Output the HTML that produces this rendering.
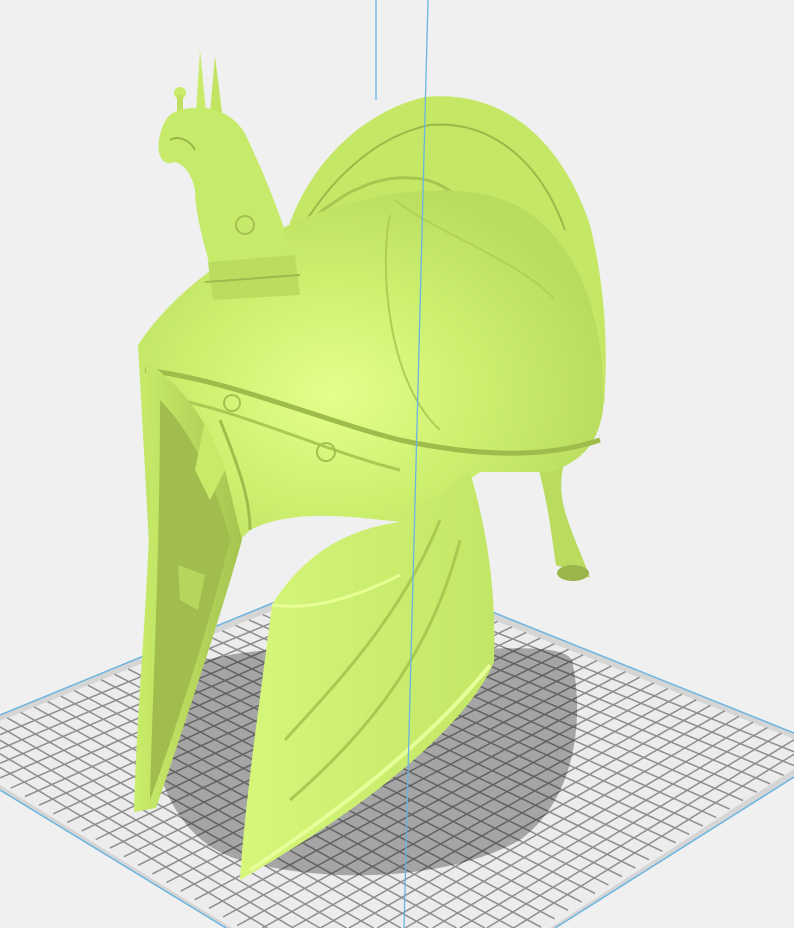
<!DOCTYPE html>
<html><head><meta charset="utf-8"><style>
html,body{margin:0;padding:0;background:#f0f0f0;width:794px;height:928px;overflow:hidden;}
svg{display:block}
</style></head><body>
<svg id="s" width="794" height="928" viewBox="0 0 794 928" xmlns="http://www.w3.org/2000/svg">
<defs>
<radialGradient id="hl" cx="0.42" cy="0.55" r="0.6">
<stop offset="0" stop-color="#e4ff8c"/><stop offset="0.5" stop-color="#cdf06f"/><stop offset="1" stop-color="#b8dc5e"/>
</radialGradient>
<linearGradient id="cheek" x1="0" y1="0" x2="1" y2="0">
<stop offset="0" stop-color="#d6f77a"/><stop offset="1" stop-color="#c2e666"/>
</linearGradient>
<linearGradient id="lg" x1="0" y1="0" x2="1" y2="0">
<stop offset="0" stop-color="#c9ee6a"/><stop offset="1" stop-color="#a4c450"/>
</linearGradient>
</defs>
<rect width="794" height="928" fill="#f0f0f0"/>
<polygon points="0,715 370,563 794,733 794,777 555,928 226,928 0,790" fill="#d5d5d5"/>
<polyline points="0,715 370,563 794,733" fill="none" stroke="#6bb4e0" stroke-width="1.5"/>
<polyline points="0,790 226,928" fill="none" stroke="#6bb4e0" stroke-width="1.5"/>
<polyline points="794,777 555,928" fill="none" stroke="#6bb4e0" stroke-width="1.5"/>
<polygon points="0,721 370,571 794,739 794,769 550,928 232,928 0,785" fill="#ececec"/>
<g id="grid" stroke="#8d8d8d" stroke-width="1.5"></g>
<path d="M150,700 C150,660 260,640 400,650 C480,652 560,640 572,660 C585,720 575,800 520,840 C450,880 330,885 240,860 C170,840 148,760 150,700 Z" fill="#000" opacity="0.3"/>
<line x1="376" y1="0" x2="376" y2="100" stroke="#6bb4e0" stroke-width="1.3"/>
<path d="M282,250 C300,170 360,112 425,97 C500,90 560,135 590,225 C606,290 608,350 604,405 L565,405 C545,300 470,215 300,262 Z" fill="#c4e866"/>
<path d="M295,240 C330,175 380,135 430,125 C490,120 540,160 565,230" fill="none" stroke="#9bb84a" stroke-width="2"/>
<path d="M300,228 q10,-8 18,-14 q10,-8 20,-14 q10,-8 22,-12 q12,-6 24,-8 q12,-3 26,-2 q14,0 28,6 q12,6 22,14 q10,8 18,18" fill="none" stroke="#a6c552" stroke-width="3"/>
<path d="M536,460 C548,500 552,540 556,565 L590,578 C584,560 574,540 566,515 C560,495 560,480 564,462 Z" fill="#b9dc5f"/>
<ellipse cx="573" cy="573" rx="16" ry="8" fill="#9ab64a"/>
<path d="M138,345 C175,290 235,245 320,212 C400,185 480,182 525,210 C585,250 606,330 603,410 C598,445 580,462 550,472 L480,472 C440,500 420,512 400,522 C340,515 290,510 250,530 L235,545 L150,560 Z" fill="url(#hl)"/>
<path d="M395,200 C430,230 520,260 555,300" fill="none" stroke="#b0d259" stroke-width="2"/>
<path d="M390,215 C380,260 385,380 440,430" fill="none" stroke="#acce57" stroke-width="2"/>
<path d="M145,370 C230,380 320,420 400,440 C470,455 540,460 600,440" fill="none" stroke="#9dbc4b" stroke-width="5"/>
<path d="M150,395 C230,405 320,450 400,470" fill="none" stroke="#a9c953" stroke-width="3"/>
<path d="M220,420 C240,470 250,500 250,530" fill="none" stroke="#9fbd4c" stroke-width="3"/>
<circle cx="232" cy="403" r="8" fill="none" stroke="#a3c150" stroke-width="2"/>
<circle cx="326" cy="452" r="9" fill="none" stroke="#a3c150" stroke-width="2"/>
<path d="M146,360 C170,380 200,400 225,470 L242,540 C225,600 200,680 156,808 L134,812 C137,700 148,600 150,500 C151,440 145,400 146,360 Z" fill="url(#lg)"/>
<path d="M160,400 C190,430 215,480 230,540 C215,600 190,690 150,800 C152,700 160,560 160,400 Z" fill="#a0bd4d"/>
<path d="M205,420 L225,470 L210,500 L195,470 Z" fill="#c7ea68"/>
<path d="M178,565 L205,575 L198,610 L180,600 Z" fill="#b5d65c"/>
<path d="M272,605 C300,560 340,530 400,522 L470,472 C490,540 496,600 494,662 C470,720 380,800 240,880 C245,800 260,700 272,605 Z" fill="url(#cheek)"/>
<path d="M272,605 C310,610 350,600 400,575" fill="none" stroke="#e8ff96" stroke-width="3"/>
<path d="M285,740 C330,690 400,620 440,520" fill="none" stroke="#a9c953" stroke-width="3"/>
<path d="M290,800 C360,740 430,660 460,540" fill="none" stroke="#a9c953" stroke-width="3"/>
<path d="M250,870 C340,810 430,740 490,665" fill="none" stroke="#e6ff98" stroke-width="4"/>
<path d="M200,50 L206,112 L196,112 Z" fill="#c8ec69"/>
<path d="M215,56 L222,112 L210,112 Z" fill="#c1e463"/>
<circle cx="180" cy="93" r="6" fill="#c8ec69"/>
<rect x="177" y="95" width="6" height="20" fill="#bfe062"/>
<path d="M175,112 C200,102 235,108 248,140 C262,170 275,200 288,240 L292,268 L212,275 C205,245 195,215 195,190 C192,175 185,165 175,162 C160,168 156,150 160,135 C163,122 168,115 175,112 Z" fill="#c6ea69"/>
<path d="M208,262 L295,255 L300,295 L213,300 Z" fill="#bbdd5f"/>
<path d="M205,282 L300,275" stroke="#9cb94b" stroke-width="2"/>
<circle cx="245" cy="225" r="9" fill="none" stroke="#a4c252" stroke-width="2"/>
<path d="M170,140 C178,135 190,140 195,150" fill="none" stroke="#98b548" stroke-width="2"/>
<line x1="428" y1="0" x2="404" y2="928" stroke="#6bb4e0" stroke-width="1.3"/>
</svg>
<script>
(function(){
var g=document.getElementById('grid');
var L=[-60,745],T=[370,571],R=[824,750],B=[393,1020],N=32;
function lp(a,b,t){return [a[0]+(b[0]-a[0])*t,a[1]+(b[1]-a[1])*t];}
function clip(a,b){
var x0=a[0],y0=a[1],dx=b[0]-x0,dy=b[1]-y0,t0=0,t1=1;
var p=[-dx,dx,-dy,dy],q=[x0-0,794-x0,y0-0,928-y0];
for(var k=0;k<4;k++){
if(p[k]==0){if(q[k]<0)return null;}
else{var r=q[k]/p[k];if(p[k]<0){if(r>t1)return null;if(r>t0)t0=r;}else{if(r<t0)return null;if(r<t1)t1=r;}}}
return [x0+dx*t0,y0+dy*t0,x0+dx*t1,y0+dy*t1];}
var s='';
function add(a,b){var c=clip(a,b);if(c)s+='<line x1="'+c[0].toFixed(1)+'" y1="'+c[1].toFixed(1)+'" x2="'+c[2].toFixed(1)+'" y2="'+c[3].toFixed(1)+'"/>';}
for(var i=1;i<N;i++){var t=i/N;
add(lp(L,T,t),lp(B,R,t));
add(lp(L,B,t),lp(T,R,t));}
g.innerHTML=s;
})();
</script>
</body></html>
